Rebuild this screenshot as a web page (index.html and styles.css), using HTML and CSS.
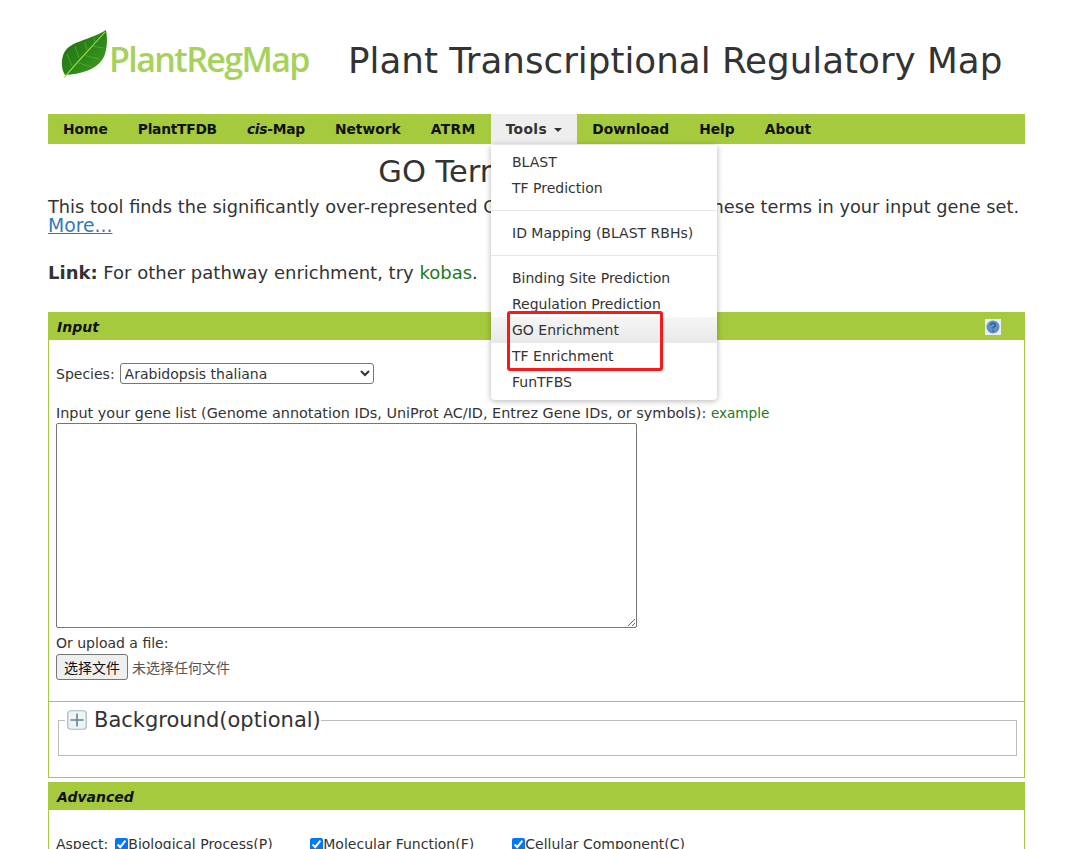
FILE: index.html
```html
<!DOCTYPE html>
<html lang="en">
<head>
  <meta charset="UTF-8">
  <meta name="viewport" content="width=device-width, initial-scale=1.0">
  <title>GO Term Enrichment</title>
  <link rel="stylesheet" href="styles.css">
</head>
<body>
  <div class="page">
    <div class="header">
      <div class="logo">
        <svg class="leaf" width="50" height="50" viewBox="0 0 50 50">
          <defs>
            <linearGradient id="leafFill" x1="0" y1="0" x2="1" y2="1">
              <stop offset="0" stop-color="#1f6a14"/>
              <stop offset="0.6" stop-color="#2c8a1a"/>
              <stop offset="1" stop-color="#4f9e22"/>
            </linearGradient>
          </defs>
          <path d="M5 46 C1 40 1 30 4 24 C10 12 28 12 46 1 C48 12 47 24 42 31 C35 41 20 45 5 46 Z" fill="url(#leafFill)"/>
          <path d="M4 49 C14 36 30 20 45 3" fill="none" stroke="#a8e04a" stroke-width="1.1"/>
          <path d="M12 37 L7 25 M19 29 L15 17 M27 21 L25 13 M35 13 L34 9 M16 33 L31 38 M23 26 L39 30 M31 17 L44 19" fill="none" stroke="#6cb536" stroke-width="0.6"/>
        </svg>
        <span class="logo-text">PlantRegMap</span>
      </div>
      <div class="site-title">Plant Transcriptional Regulatory Map</div>
    </div>

    <div class="nav">
      <a class="nav-item">Home</a>
      <a class="nav-item nav-narrow">PlantTFDB</a>
      <a class="nav-item nav-narrow"><i>cis</i>-Map</a>
      <a class="nav-item">Network</a>
      <a class="nav-item nav-wide">ATRM</a>
      <a class="nav-item nav-wide open">Tools <span class="caret"></span></a>
      <a class="nav-item">Download</a>
      <a class="nav-item">Help</a>
      <a class="nav-item">About</a>

      <div class="menu">
        <a class="menu-item">BLAST</a>
        <a class="menu-item">TF Prediction</a>
        <div class="divider"></div>
        <a class="menu-item">ID Mapping (BLAST RBHs)</a>
        <div class="divider"></div>
        <a class="menu-item">Binding Site Prediction</a>
        <a class="menu-item">Regulation Prediction</a>
        <a class="menu-item active">GO Enrichment</a>
        <a class="menu-item">TF Enrichment</a>
        <a class="menu-item">FunTFBS</a>
      </div>
      <div class="highlight"></div>
    </div>

    <h2 class="page-title">GO Term Enrichment</h2>
    <p class="intro">This tool finds the significantly over-represented GO terms and highlights these terms in your input gene set.<a class="more">More...</a></p>
    <p class="link-line"><b>Link:</b> For other pathway enrichment, try <a class="green">kobas</a>.</p>

    <div class="panel input-panel">
      <div class="panel-head">
        <span>Input</span>
        <svg width="16" height="16" viewBox="0 0 16 16">
          <rect width="16" height="16" fill="#e8eef4"/>
          <circle cx="8" cy="8" r="6.5" fill="#5f8fc4"/>
          <path d="M5.6 6.2 C5.8 3.6 10.4 3.6 10.4 6.2 C10.4 8 8 7.8 8 9.6" fill="none" stroke="#2f5f96" stroke-width="1.5"/>
          <circle cx="8" cy="11.8" r="0.9" fill="#2f5f96"/>
        </svg>
      </div>
      <div class="panel-body">
        <div class="species">
          <label>Species:</label>
          <select class="species-select"><option>Arabidopsis thaliana</option></select>
        </div>
        <div class="gene-label">Input your gene list (Genome annotation IDs, UniProt AC/ID, Entrez Gene IDs, or symbols): <a class="green-plain">example</a></div>
        <textarea class="gene-list"></textarea>
        <div class="upload-label">Or upload a file:</div>
        <div class="upload-row">
          <button class="file-btn">选择文件</button>
          <span class="file-none">未选择任何文件</span>
        </div>
      </div>
      <div class="background-wrap">
        <fieldset class="background">
          <legend>
            <svg width="20" height="20" viewBox="0 0 20 20">
              <rect x="0.75" y="0.75" width="18.5" height="18.5" rx="3" fill="#eef3f4" stroke="#9fbcc4" stroke-width="1.2"/>
              <path d="M10 3.5 V16.5 M3.5 10 H16.5" stroke="#5f8793" stroke-width="1.6"/>
            </svg>
            <span>Background(optional)</span>
          </legend>
        </fieldset>
      </div>
    </div>

    <div class="panel advanced-panel">
      <div class="panel-head"><span>Advanced</span></div>
      <div class="aspect-row">
        <span>Aspect:</span>
        <label class="aspect a1"><input type="checkbox" checked>Biological Process(P)</label>
        <label class="aspect a2"><input type="checkbox" checked>Molecular Function(F)</label>
        <label class="aspect"><input type="checkbox" checked>Cellular Component(C)</label>
      </div>
    </div>
  </div>
</body>
</html>
```

FILE: styles.css
```css
html, body {
  height: 849px;
  overflow: hidden;
}
body {
  margin: 0;
  background: #fff;
  color: #333;
  font-family: "DejaVu Sans", Verdana, "Noto Sans CJK SC", sans-serif;
  font-size: 14px;
}
.page {
  width: 977px;
  margin-left: 48px;
}

/* header */
.header {
  display: flex;
  align-items: center;
  height: 114px;
}
.logo {
  display: flex;
  align-items: flex-end;
  width: 300px;
  padding: 0 0 0 12px;
  box-sizing: border-box;
  height: 52px;
  margin-top: -9px;
}
.leaf {
  flex: none;
}
.logo-text {
  font-family: "Open Sans", sans-serif;
  font-size: 34px;
  font-weight: 600;
  line-height: 42px;
  letter-spacing: -1.6px;
  color: #a6d25c;
  margin: 0 0 -1px -1px;
}
.site-title {
  font-size: 35.7px;
  color: #333;
  white-space: nowrap;
  margin-top: 7px;
}

/* nav */
.nav {
  position: relative;
  display: flex;
  height: 30px;
  background: #a6ca3e;
}
.nav-item {
  padding: 0 15px;
  line-height: 30px;
  font-size: 13.8px;
  font-weight: bold;
  color: #111;
}
.nav-item i {
  font-weight: bold;
}
.nav-narrow {
  letter-spacing: -0.25px;
}
.nav-wide {
  letter-spacing: 0.4px;
}
.nav-item.open {
  background: #eee;
  color: #333;
}
.caret {
  display: inline-block;
  border-top: 4px solid #333;
  border-left: 4px solid transparent;
  border-right: 4px solid transparent;
  vertical-align: middle;
  margin-left: 2px;
}
.menu {
  position: absolute;
  left: 443px;
  top: 31px;
  width: 226px;
  padding: 4px 0;
  box-sizing: border-box;
  height: 255px;
  background: #fff;
  border-radius: 0 0 4px 4px;
  box-shadow: 0 1px 6px rgba(0, 0, 0, 0.3);
  z-index: 5;
}
.menu-item {
  display: block;
  padding: 0 21px;
  line-height: 26px;
  font-size: 14px;
  color: #333;
  white-space: nowrap;
}
.menu-item.active {
  background: linear-gradient(#f5f5f5, #e8e8e8);
}
.divider {
  height: 1px;
  margin: 9px 0;
  background: #e5e5e5;
}
.highlight {
  position: absolute;
  left: 459px;
  top: 197px;
  width: 156px;
  height: 60px;
  border: 3px solid #f81a1a;
  border-radius: 3px;
  box-sizing: border-box;
  z-index: 6;
}

/* intro */
.page-title {
  margin: 9px 0 0;
  font-size: 30.5px;
  font-weight: normal;
  line-height: 38px;
  text-align: center;
}
.intro {
  margin: 7px 0 0;
  font-size: 17.75px;
  line-height: 18px;
  white-space: nowrap;
}
.more {
  display: block;
  margin-top: 1px;
  color: #337ab7;
  font-size: 18.8px;
  text-decoration: underline;
}
.link-line {
  margin: 28px 0 0;
  font-size: 18px;
  line-height: 20px;
}
.green {
  color: #1c7a1c;
}

/* panels */
.panel {
  border: 1px solid #a6ca3e;
}
.input-panel {
  margin-top: 29px;
  height: 466px;
  box-sizing: border-box;
}
.panel-head {
  display: flex;
  justify-content: space-between;
  align-items: center;
  height: 27px;
  padding: 0 23px 0 8px;
  background: #a6ca3e;
  font-size: 14px;
  font-weight: bold;
  font-style: italic;
  color: #111;
}
.panel-body {
  height: 362px;
  padding: 0 7px;
  border-bottom: 1px solid #a6ca3e;
  box-sizing: border-box;
}
.species {
  display: flex;
  align-items: center;
  gap: 5px;
  padding-top: 23px;
}
.species-select {
  width: 254px;
  height: 21px;
  font-family: inherit;
  font-size: 14px;
  color: #333;
  background: #fff;
  border: 1px solid #767676;
  border-radius: 3px;
}
.gene-label {
  margin-top: 20px;
  font-size: 14.4px;
  line-height: 18px;
  white-space: nowrap;
}
.green-plain {
  color: #1c7a1c;
  font-size: 13.6px;
}
.gene-list {
  display: block;
  width: 581px;
  height: 205px;
  margin: 1px 0 0;
  padding: 2px;
  box-sizing: border-box;
  border: 1px solid #767676;
  border-radius: 2px;
}
.upload-label {
  margin-top: 6px;
  line-height: 18px;
}
.upload-row {
  display: flex;
  align-items: center;
  gap: 4px;
  margin-top: 2px;
}
.file-btn {
  width: 72px;
  height: 26px;
  padding: 0;
  font-family: "Noto Sans CJK SC", sans-serif;
  font-size: 14px;
  color: #111;
  background: #efefef;
  border: 1px solid #767676;
  border-radius: 3px;
}
.file-none {
  font-family: "Noto Sans CJK SC", sans-serif;
  font-size: 14px;
  color: #555;
}
.background-wrap {
  padding: 0 7px 0 9px;
}
.background {
  height: 49px;
  margin: 5px 0 0;
  padding: 0 6px;
  box-sizing: border-box;
  border: 1px solid #bbb;
}
.background legend {
  display: flex;
  align-items: center;
  gap: 7px;
  padding: 0 0 0 2px;
  font-size: 21px;
  line-height: 26px;
  color: #333;
}
.advanced-panel {
  margin-top: 4px;
}
.aspect-row {
  display: flex;
  align-items: center;
  padding: 26px 7px 0;
  height: 16px;
  box-sizing: content-box;
}
.aspect {
  display: flex;
  align-items: center;
}
.aspect input {
  margin: 0 0 0 7px;
}
.a1 {
  width: 195px;
}
.a2 {
  width: 202px;
}
```
